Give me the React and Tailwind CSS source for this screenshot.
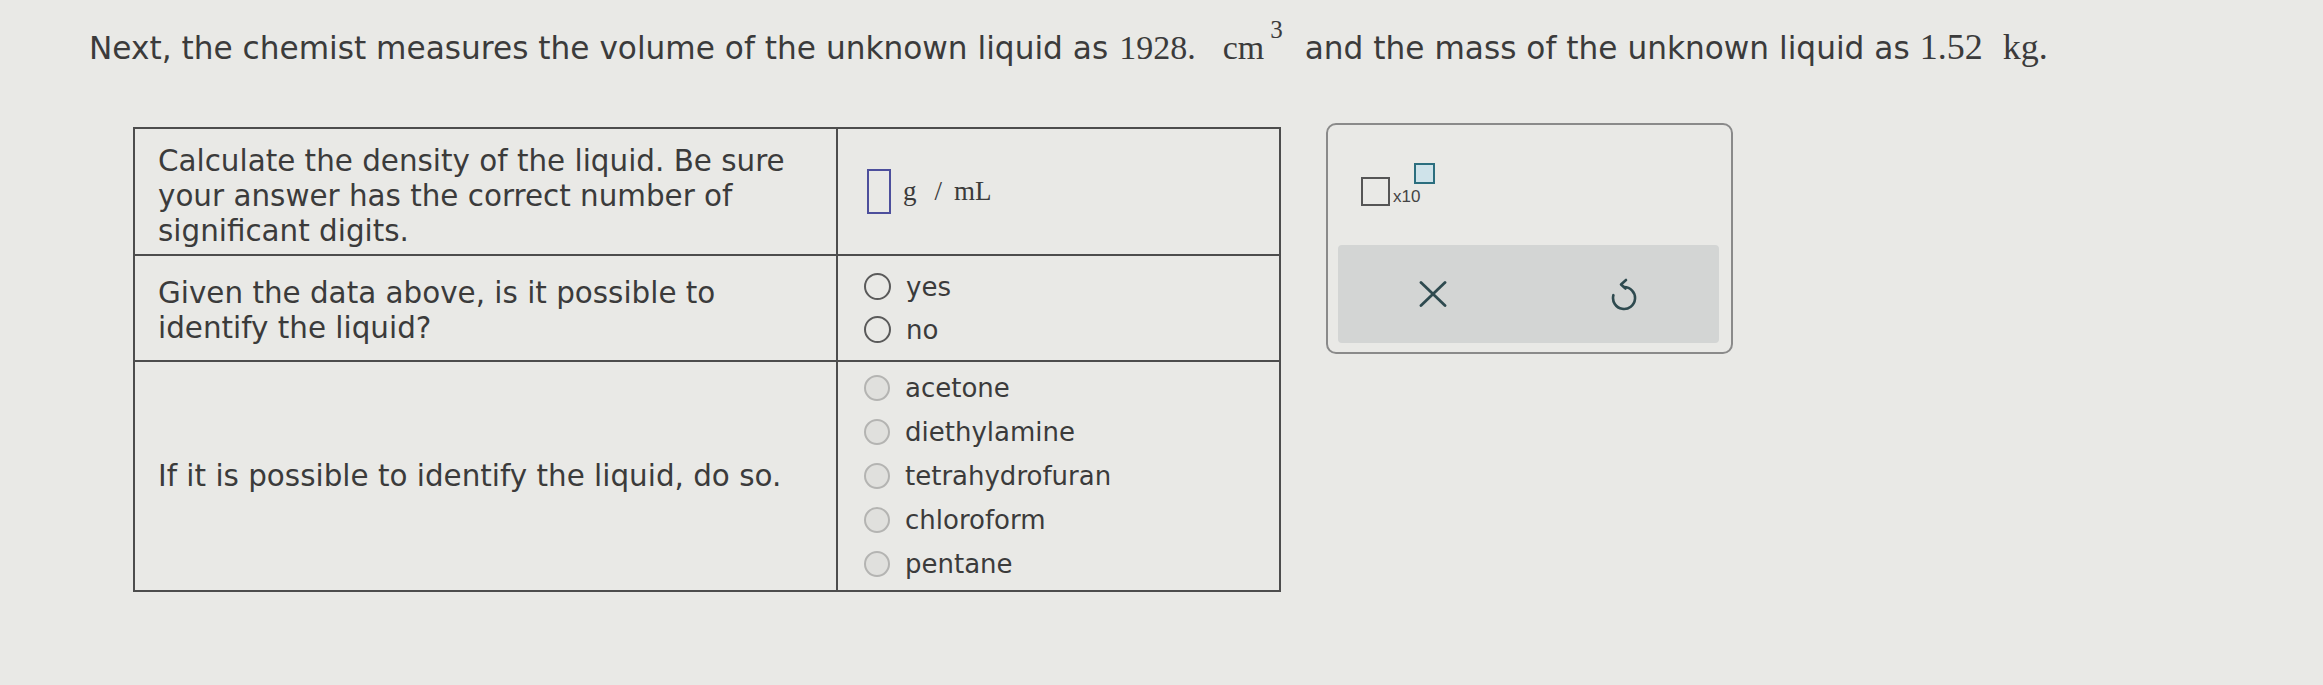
import React from "react";

const sans = "font-['DejaVu_Sans',Verdana,sans-serif]";
const serif = "font-['Liberation_Serif','Times_New_Roman',serif]";

function Radio({ light }) {
  return light ? (
    <span className="inline-block w-[26px] h-[26px] rounded-full border-2 border-[#b4b4b2] bg-[#e0e0dd] shrink-0" />
  ) : (
    <span className="inline-block w-[27px] h-[27px] rounded-full border-2 border-[#5a5a5a] shrink-0" />
  );
}

function Option({ label, light, h }) {
  return (
    <div className={`flex items-center ${h}`}>
      <Radio light={light} />
      <span className="ml-[15px] text-[26px] leading-none">{label}</span>
    </div>
  );
}

function UndoIcon() {
  return (
    <svg width="30" height="34" viewBox="0 0 30 34" fill="none" stroke="#2e4a4f" strokeWidth="2.6" strokeLinecap="round" strokeLinejoin="round">
      <path d="M15 10 A11 11 0 1 1 4.4 18.2" />
      <polyline points="17,3 12,7.5 16.5,11.5" />
    </svg>
  );
}

function XIcon() {
  return (
    <svg width="28" height="26" viewBox="0 0 28 26" fill="none" stroke="#2e4a4f" strokeWidth="2.8" strokeLinecap="round">
      <line x1="2" y1="1.5" x2="26" y2="24.5" />
      <line x1="26" y1="1.5" x2="2" y2="24.5" />
    </svg>
  );
}

export default function App() {
  return (
    <div className={`min-h-[685px] w-full bg-[#e9e9e6] text-[#3b3b3b] ${sans}`}>
      <div className="pl-[89px] pt-[27px] h-[127px] text-[31.2px] leading-[40px] whitespace-nowrap">
        Next, the chemist measures the volume of the unknown liquid as
        <span className={`${serif} ml-[11px] text-[34px]`}>1928.</span>
        <span className={`${serif} ml-[27px] text-[34px]`}>cm</span>
        <span className={`${serif} relative -top-[21px] ml-[6px] text-[25px] leading-none`}>3</span>
        <span className="ml-[22px]">and the mass of the unknown liquid as</span>
        <span className={`${serif} ml-[10px] text-[36px]`}>1.52</span>
        <span className={`${serif} ml-[20px] text-[36px]`}>kg.</span>
      </div>

      <div className="flex items-start pl-[133px]">
        <div className="w-[1148px] border-2 border-[#4d4d4d] grid grid-cols-[703px_1fr]">
          {/* Row 1 */}
          <div className="h-[127px] border-r-2 border-b-2 border-[#4d4d4d] flex items-center pl-[23px] pr-[30px]">
            <p className="text-[29.4px] leading-[35px] pt-[10px]">
              Calculate the density of the liquid. Be sure your answer has the correct number of significant digits.
            </p>
          </div>
          <div className="h-[127px] border-b-2 border-[#4d4d4d] flex items-center pl-[29px]">
            <span className="inline-block w-[24px] h-[45px] border-2 border-[#4d4f9c]" />
            <span className={`${serif} ml-[12px] text-[27px]`}>g</span>
            <span className={`${serif} ml-[18px] text-[27px]`}>/</span>
            <span className={`${serif} ml-[12px] text-[27px]`}>mL</span>
          </div>

          {/* Row 2 */}
          <div className="h-[106px] border-r-2 border-b-2 border-[#4d4d4d] flex items-center pl-[23px] pr-[30px]">
            <p className="text-[29.4px] leading-[35px] pt-[6px]">
              Given the data above, is it possible to identify the liquid?
            </p>
          </div>
          <div className="h-[106px] border-b-2 border-[#4d4d4d] flex flex-col justify-center pl-[26px]">
            <Option label="yes" h="h-[43px]" />
            <Option label="no" h="h-[43px]" />
          </div>

          {/* Row 3 */}
          <div className="h-[228px] border-r-2 border-[#4d4d4d] flex items-center pl-[23px] pr-[30px]">
            <p className="text-[29.4px] leading-[35px]">If it is possible to identify the liquid, do so.</p>
          </div>
          <div className="h-[228px] flex flex-col justify-center pl-[26px]">
            {["acetone", "diethylamine", "tetrahydrofuran", "chloroform", "pentane"].map((o) => (
              <Option key={o} label={o} light h="h-[44px]" />
            ))}
          </div>
        </div>

        <div className="ml-[45px] -mt-[4px] w-[407px] h-[231px] border-2 border-[#8a8a8a] rounded-[10px] flex flex-col">
          <div className="h-[120px] pl-[33px] pt-[38px]">
            <div className="flex items-start">
              <div className="mt-[14px] w-[29px] h-[29px] border-2 border-[#555555]" />
              <span className="mt-[25px] ml-[3px] text-[17px] leading-none text-[#444] font-['Liberation_Sans',Arial,sans-serif]">x10</span>
              <div className="-ml-[6px] w-[21px] h-[21px] border-2 border-[#2b6e7e] bg-[#cfe3ea]" />
            </div>
          </div>
          <div className="ml-[10px] w-[381px] h-[98px] rounded-[4px] bg-[#d3d5d4] flex">
            <div className="flex-1 flex items-center justify-center">
              <XIcon />
            </div>
            <div className="flex-1 flex items-center justify-center">
              <UndoIcon />
            </div>
          </div>
        </div>
      </div>
    </div>
  );
}
